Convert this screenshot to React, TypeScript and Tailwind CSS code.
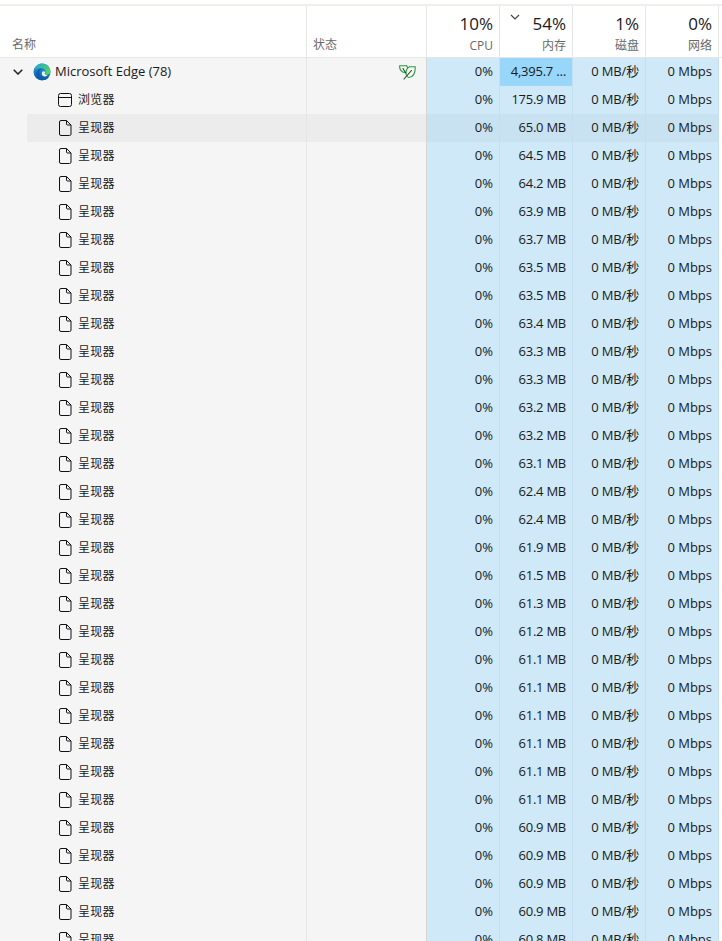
const memory = [
  '4,395.7 …', '175.9 MB', '65.0 MB', '64.5 MB', '64.2 MB', '63.9 MB', '63.7 MB', '63.5 MB', '63.5 MB', '63.4 MB',
  '63.3 MB', '63.3 MB', '63.2 MB', '63.2 MB', '63.1 MB', '62.4 MB', '62.4 MB', '61.9 MB', '61.5 MB', '61.3 MB',
  '61.2 MB', '61.1 MB', '61.1 MB', '61.1 MB', '61.1 MB', '61.1 MB', '61.1 MB', '60.9 MB', '60.9 MB', '60.9 MB',
  '60.9 MB', '60.8 MB',
];

const gridCols = 'grid grid-cols-[307px_120px_73px_73px_73px_73px]';

function EdgeIcon() {
  return (
    <svg width="18" height="18" viewBox="0 0 18 18">
      <defs>
        <linearGradient id="edgeBlue" x1="0" y1="0" x2="0" y2="1">
          <stop offset="0" stopColor="#2aa5e0" />
          <stop offset="1" stopColor="#0a55a0" />
        </linearGradient>
        <linearGradient id="edgeGreen" x1="0" y1="0" x2="1" y2="1">
          <stop offset="0" stopColor="#1fa8cf" />
          <stop offset="1" stopColor="#62d84f" />
        </linearGradient>
      </defs>
      <circle cx="9" cy="9" r="8.5" fill="url(#edgeBlue)" />
      <path d="M2 6.500C3.200 2.800 6 .5 9.200.5c4.600 0 8.300 3.600 8.300 8 0 1.900-1.400 3.100-3.200 3.100-1.300 0-2.300-.6-2.300-1.300 0-.4.4-.6.4-1.500 0-2.100-1.600-3.800-3.800-3.800C5.800 5 3.400 5.200 2 6.500z" fill="url(#edgeGreen)" />
      <path d="M6.300 9.600c0-2 1.400-3.400 3.200-3.700-2.800-.8-5.900 1-6.200 4.300-.3 3.200 2.300 6.500 6.300 6.800 2.700.2 5-1 6.300-3.100-1.600 1-3.800 1.300-5.800.6-2.300-.8-3.800-2.800-3.800-4.900z" fill="#0b5fae" />
      <path d="M9 9.500c.5-1.500 2.600-1.700 3-.6.2.600-.3 1-.3 1.500 0 1 1.400 1.600 3 1.300-1 1.700-3.300 2.300-4.800 1.300C8.800 12.200 8.600 10.700 9 9.500z" fill="#e9f5f8" />
    </svg>
  );
}

function LeafIcon() {
  return (
    <svg width="17" height="15" viewBox="0 0 17 15" fill="none" strokeWidth="1.100" strokeLinejoin="round" strokeLinecap="round">
      <path d="M7.500 .7H.6c-.2 3.500 1.400 6.100 4.900 7" stroke="#2b9a3c" />
      <path d="M7.500 .7c.5.6.8 1.100 1 1.800" stroke="#2b9a3c" />
      <path d="M16.300 1.700H10.500C8 3 6.800 6 7 9c.2 1.800 1.200 3 2.500 3.500 4 0 6.800-3.800 6.800-10.800z" stroke="#2b9a3c" />
      <path d="M4 3.500l2.800 4.500M12.500 5.500L5 14" stroke="#124f26" />
    </svg>
  );
}

function PageIcon() {
  return (
    <svg width="14" height="16" viewBox="0 0 14 16" fill="none" stroke="#111" strokeWidth="1" strokeLinejoin="round">
      <path d="M3 .5h5.500l4.500 4.500v9a1.500 1.500 0 0 1-1.500 1.500H3A1.500 1.500 0 0 1 1.500 14V2A1.500 1.500 0 0 1 3 .5z" />
      <path d="M8.500 .5V4a1 1 0 0 0 1 1H13" />
    </svg>
  );
}

function WindowIcon() {
  return (
    <svg className="-ml-px" width="16" height="16" viewBox="0 0 16 16" fill="none" stroke="#111" strokeWidth="1">
      <rect x="1.500" y="1.500" width="13" height="13" rx="2" />
      <path d="M1.500 5.500h13" />
    </svg>
  );
}

function HeaderCell({ percent, label, sorted }: { percent: string; label: string; sorted?: boolean }) {
  return (
    <div className="relative flex flex-col items-end border-r border-[#e6e6e6] pr-[6px] pt-[6px]">
      {sorted && (
        <svg className="absolute left-[10px] top-[8px]" width="10" height="6" viewBox="0 0 10 6" fill="none" stroke="#444" strokeWidth="1.200">
          <path d="M1 1l4 4 4-4" />
        </svg>
      )}
      <span className="text-[17px] leading-[24px] text-[#1a1a1a]">{percent}</span>
      <span className="mt-[1px] text-[12px] leading-[18px] text-[#6a6a6a]">{label}</span>
    </div>
  );
}

function MetricCell({ children, strong, tracking }: { children: string; strong?: boolean; tracking?: string }) {
  return (
    <div
      className={`flex items-center justify-end border-r border-[#c3dff0] pr-[6px] text-[13px] text-[#1a1a1a] ${tracking ?? ''} ${
        strong ? 'bg-[#98d6fa]' : ''
      }`}
    >
      {children}
    </div>
  );
}

function Row({ index, value }: { index: number; value: string }) {
  const isGroup = index === 0;
  const isHovered = index === 2;

  return (
    <div className={`${gridCols} h-[28px]`}>
      <div className="flex items-center border-r border-[#e6e6e6] bg-[#f5f5f5]">
        {isGroup ? (
          <>
            <svg className="ml-[13px]" width="10" height="6" viewBox="0 0 10 6" fill="none" stroke="#222" strokeWidth="1.500">
              <path d="M.7.7L5 5l4.300-4.300" />
            </svg>
            <span className="ml-[10px]">
              <EdgeIcon />
            </span>
            <span className="ml-[4px] text-[13px] text-[#1a1a1a]">Microsoft Edge (78)</span>
          </>
        ) : (
          <div className={`ml-[27px] flex h-full flex-1 items-center pl-[31px] ${isHovered ? 'bg-[#ececec]' : ''}`}>
            {index === 1 ? <WindowIcon /> : <PageIcon />}
            <span className={`text-[12px] text-[#1a1a1a] tracking-[0.2px] ${index === 1 ? 'ml-[5px]' : 'ml-[6px]'}`}>{index === 1 ? '浏览器' : '呈现器'}</span>
          </div>
        )}
      </div>
      <div className={`flex items-center justify-end border-r border-[#d5d5d5] pr-[10px] ${isHovered ? 'bg-[#ececec]' : 'bg-[#f5f5f5]'}`}>
        {isGroup && <LeafIcon />}
      </div>
      <div className={`col-span-4 ${isHovered ? 'bg-[#c8e2f2]' : 'bg-[#cfe9f8]'} grid grid-cols-[73px_73px_73px_73px]`}>
        <MetricCell>0%</MetricCell>
        <MetricCell strong={isGroup} tracking="tracking-[-0.25px]">{value}</MetricCell>
        <MetricCell tracking="tracking-[-0.15px]">0 MB/秒</MetricCell>
        <MetricCell>0 Mbps</MetricCell>
      </div>
    </div>
  );
}

export default function App() {
  return (
    <div className="h-[941px] w-[722px] overflow-hidden bg-white font-['Open_Sans','Noto_Sans_CJK_SC',sans-serif]">
      <div className="h-[6px] border-b-2 border-[#f0efec]" />
      <div className={`${gridCols} h-[51px]`}>
        <div className="flex items-end border-r border-[#e6e6e6] pb-[3px] pl-[12px] text-[12px] leading-[18px] text-[#6a6a6a]">名称</div>
        <div className="flex items-end border-r border-[#e6e6e6] pb-[3px] pl-[6px] text-[12px] leading-[18px] text-[#6a6a6a]">状态</div>
        <HeaderCell percent="10%" label="CPU" />
        <HeaderCell percent="54%" label="内存" sorted />
        <HeaderCell percent="1%" label="磁盘" />
        <HeaderCell percent="0%" label="网络" />
      </div>
      <div className="border-t border-[#e6e6e6]">
        {memory.map((value, i) => (
          <Row key={i} index={i} value={value} />
        ))}
      </div>
    </div>
  );
}
